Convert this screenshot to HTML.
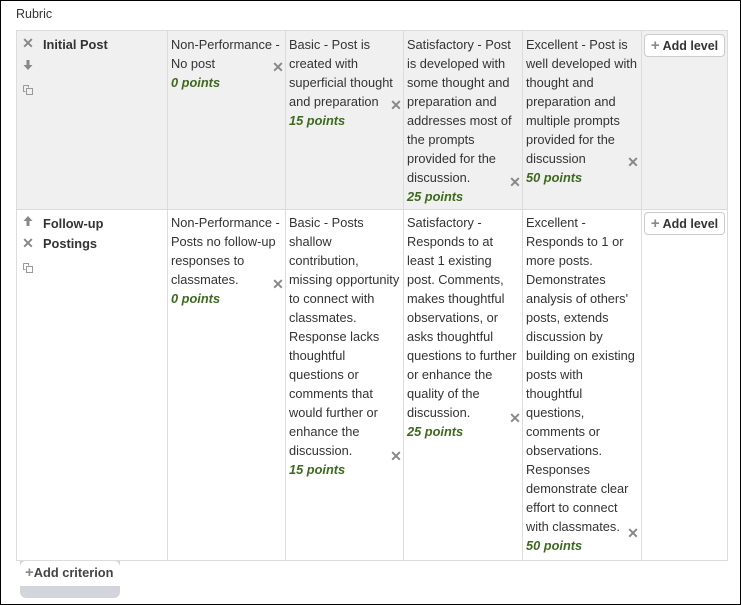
<!DOCTYPE html>
<html><head><meta charset="utf-8"><style>
*{margin:0;padding:0;box-sizing:border-box}
body{width:741px;height:605px;overflow:hidden;background:#fff;font-family:"Liberation Sans",Arial,sans-serif;font-size:12.8px;color:#333;position:relative}
.frame{position:absolute;left:0;top:0;width:741px;height:605px;border:1px solid #000}
.ttl{position:absolute;left:16px;top:7px;font-size:12.5px}
.tbl{position:absolute;left:16px;top:30px;width:712px;height:531px;border:1px solid #dcdcdc}
.r1{position:absolute;left:0;top:0;width:710px;height:179px;background:#f0f0f0;border-bottom:1px solid #dcdcdc}
.vl{position:absolute;width:1px;background:#dcdcdc;top:0;height:529px}
.c{position:absolute;line-height:19px;white-space:nowrap}
.p{color:#3d6a1f;font-style:italic;font-weight:bold}
.x{position:absolute;color:#888;font-size:14px;font-weight:bold;line-height:14px;width:12px;text-align:center}
.crit{position:absolute;font-weight:bold;line-height:20px;font-size:12.8px}
.ic{position:absolute;color:#888;font-size:12px;line-height:12px;width:12px;text-align:center;font-weight:bold}
svg.ic{width:12px;height:12px}
.btn{position:absolute;left:644px;width:81px;height:23px;border:1px solid #ccc;border-radius:4px;background:#fff;font-weight:bold;font-size:12.5px;line-height:21px;text-align:center;color:#333}
.btn b{color:#888;font-size:15px}
.ac{position:absolute;left:20px;top:561px;width:100px;height:37px;border-radius:0 0 6px 6px;background:#d2d6dc;overflow:hidden}
.ac div{height:25px;background:#fff;border-radius:6px 6px 0 0;font-weight:bold;line-height:24px;padding-left:5px;color:#444}
</style></head><body>
<div class="frame"></div>
<div class="ttl">Rubric</div>
<div class="tbl"><div class="r1"></div>
<div class="vl" style="left:150px"></div><div class="vl" style="left:268px"></div><div class="vl" style="left:386px"></div><div class="vl" style="left:505px"></div><div class="vl" style="left:624px"></div>
</div>
<div class="ic" style="left:22px;top:37px;font-size:14px">✕</div>
<svg class="ic" style="left:22px;top:59px" viewBox="0 0 12 12"><path d="M4.5 1h3v5h3L6 11 1.5 6h3z" fill="#888"/></svg>
<svg class="ic" style="left:22px;top:84px" viewBox="0 0 12 12"><path d="M1.5 1.5h5v2M1.5 1.5v6h2" stroke="#999" fill="none"/><rect x="4.5" y="4.5" width="6" height="6" stroke="#999" fill="none"/></svg>
<div class="crit" style="left:43px;top:35px">Initial Post</div>
<svg class="ic" style="left:22px;top:215px" viewBox="0 0 12 12"><path d="M4.5 11h3V6h3L6 1 1.5 6h3z" fill="#888"/></svg>
<div class="ic" style="left:22px;top:237px;font-size:14px">✕</div>
<svg class="ic" style="left:22px;top:262px" viewBox="0 0 12 12"><path d="M1.5 1.5h5v2M1.5 1.5v6h2" stroke="#999" fill="none"/><rect x="4.5" y="4.5" width="6" height="6" stroke="#999" fill="none"/></svg>
<div class="crit" style="left:43px;top:214px;line-height:20px">Follow-up<br>Postings</div>

<div class="c" style="left:171px;top:35px">Non-Performance -<br>No post<br><span class="p">0 points</span></div>
<div class="c" style="left:289px;top:35px">Basic - Post is<br>created with<br>superficial thought<br>and preparation<br><span class="p">15 points</span></div>
<div class="c" style="left:407px;top:35px">Satisfactory - Post<br>is developed with<br>some thought and<br>preparation and<br>addresses most of<br>the prompts<br>provided for the<br>discussion.<br><span class="p">25 points</span></div>
<div class="c" style="left:526px;top:35px">Excellent - Post is<br>well developed with<br>thought and<br>preparation and<br>multiple prompts<br>provided for the<br>discussion<br><span class="p">50 points</span></div>

<div class="c" style="left:171px;top:213px">Non-Performance -<br>Posts no follow-up<br>responses to<br>classmates.<br><span class="p">0 points</span></div>
<div class="c" style="left:289px;top:213px">Basic - Posts<br>shallow<br>contribution,<br>missing opportunity<br>to connect with<br>classmates.<br>Response lacks<br>thoughtful<br>questions or<br>comments that<br>would further or<br>enhance the<br>discussion.<br><span class="p">15 points</span></div>
<div class="c" style="left:407px;top:213px">Satisfactory -<br>Responds to at<br>least 1 existing<br>post. Comments,<br>makes thoughtful<br>observations, or<br>asks thoughtful<br>questions to further<br>or enhance the<br>quality of the<br>discussion.<br><span class="p">25 points</span></div>
<div class="c" style="left:526px;top:213px">Excellent -<br>Responds to 1 or<br>more posts.<br>Demonstrates<br>analysis of others'<br>posts, extends<br>discussion by<br>building on existing<br>posts with<br>thoughtful<br>questions,<br>comments or<br>observations.<br>Responses<br>demonstrate clear<br>effort to connect<br>with classmates.<br><span class="p">50 points</span></div>

<div class="x" style="left:272px;top:60px">✕</div>
<div class="x" style="left:390px;top:98px">✕</div>
<div class="x" style="left:509px;top:175px">✕</div>
<div class="x" style="left:627px;top:155px">✕</div>
<div class="x" style="left:272px;top:277px">✕</div>
<div class="x" style="left:390px;top:449px">✕</div>
<div class="x" style="left:509px;top:411px">✕</div>
<div class="x" style="left:627px;top:526px">✕</div>

<div class="btn" style="top:34px"><b>+</b> Add level</div>
<div class="btn" style="top:212px"><b>+</b> Add level</div>
<div class="ac"><div><span style="color:#888;font-size:15px">+</span>Add criterion</div></div>
</body></html>
